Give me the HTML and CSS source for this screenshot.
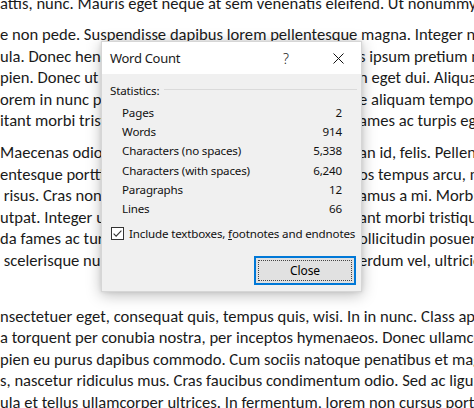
FILE: index.html
```html
<!DOCTYPE html>
<html lang="en">
<head>
<meta charset="utf-8">
<title>Word Count</title>
<link rel="stylesheet" href="styles.css">
</head>
<body>
<div class="doc">
  <p class="para">
    <span class="ln">attis, nunc. Mauris eget neque at sem venenatis eleifend. Ut nonummy.</span>
  </p>
  <p class="para">
    <span class="ln">e non pede. Suspendisse dapibus lorem pellentesque magna. Integer nulla.</span>
    <span class="ln split"><span class="l">ula. Donec hendrerit, felis et imperdiet euismod, purus ipsum pretium</span><span class="r">s ipsum pretium metus,</span></span>
    <span class="ln split"><span class="l">pien. Donec ut est in lectus consequat consequat. Etiam eget dui.</span><span class="r">n eget dui. Aliquam erat</span></span>
    <span class="ln split"><span class="l">orem in nunc porta tristique. Proin nec augue. Quisque aliquam</span><span class="r">e aliquam tempor magna.</span></span>
    <span class="ln split"><span class="l">itant morbi tristique senectus et netus et malesuada fames ac turpis</span><span class="r">ames ac turpis egestas.</span></span>
  </p>
  <p class="para para-end">
    <span class="ln split"><span class="l">Maecenas odio dolor, vulputate vel, auctor ac, accumsan id, felis.</span><span class="r">an id, felis. Pellentesque</span></span>
    <span class="ln split"><span class="l">entesque porttitor, velit lacinia egestas auctor, diam eros tempus</span><span class="r">os tempus arcu, nec</span></span>
    <span class="ln split"><span class="l"> risus. Cras non magna vel ante adipiscing rhoncus. Vivamus a mi.</span><span class="r">amus a mi. Morbi neque.</span></span>
    <span class="ln split"><span class="l">utpat. Integer ultrices lobortis eros. Pellentesque habitant</span><span class="r">ant morbi tristique</span></span>
    <span class="ln split"><span class="l">da fames ac turpis egestas. Proin semper, ante vitae sollicitudin</span><span class="r">ollicitudin posuere,</span></span>
    <span class="ln split"><span class="l"> scelerisque nunc massa eget pede. Sed velit urna, interdum</span><span class="r">erdum vel, ultricies</span></span>
  </p>
  <p class="para">
    <span class="ln">nsectetuer eget, consequat quis, tempus quis, wisi. In in nunc. Class aptent</span>
    <span class="ln">a torquent per conubia nostra, per inceptos hymenaeos. Donec ullamcorper</span>
    <span class="ln">pien eu purus dapibus commodo. Cum sociis natoque penatibus et magnis</span>
    <span class="ln">s, nascetur ridiculus mus. Cras faucibus condimentum odio. Sed ac ligula.</span>
    <span class="ln">ula et tellus ullamcorper ultrices. In fermentum, lorem non cursus porttitor,</span>
  </p>
</div>

<div class="dialog" role="dialog" aria-label="Word Count">
  <div class="titlebar">
    <span class="title">Word Count</span>
    <span class="tbtn help">?</span>
    <span class="tbtn close">
      <svg width="11" height="11" viewBox="0 0 11 11"><path d="M0.5 0.5L10.5 10.5M10.5 0.5L0.5 10.5" stroke="#111" stroke-width="1" fill="none"/></svg>
    </span>
  </div>
  <div class="body">
    <div class="stats-head"><span>Statistics:</span><span class="rule"></span></div>
    <div class="rows">
      <div class="row"><span>Pages</span><span>2</span></div>
      <div class="row"><span>Words</span><span>914</span></div>
      <div class="row"><span>Characters (no spaces)</span><span>5,338</span></div>
      <div class="row"><span>Characters (with spaces)</span><span>6,240</span></div>
      <div class="row"><span>Paragraphs</span><span>12</span></div>
      <div class="row"><span>Lines</span><span>66</span></div>
    </div>
    <label class="check">
      <svg class="box" width="13" height="13" viewBox="0 0 13 13"><rect x="0.5" y="0.5" width="12" height="12" fill="#fff" stroke="#333"/><path d="M2.6 6.6L5.1 9.1L10.4 3.6" fill="none" stroke="#333" stroke-width="1.1"/></svg>
      <span>Include textboxes, <u>f</u>ootnotes and endnotes</span>
    </label>
    <div class="actions">
      <button class="btn" type="button"><span class="focus"></span>Close</button>
    </div>
  </div>
</div>
</body>
</html>
```

FILE: styles.css
```css
html, body {
  margin: 0;
  padding: 0;
  background: #ffffff;
  overflow: hidden;
}

body {
  position: relative;
  width: 474px;
  height: 408px;
  font-family: Carlito, Calibri, Lato, "Liberation Sans", sans-serif;
  color: #1a1a1a;
}

.doc {
  margin-top: -7.5px;
}

.para {
  margin: 0 0 10px;
}

.para-end {
  margin-bottom: 34px;
}

.ln {
  display: block;
  height: 21.6px;
  line-height: 21.6px;
  font-size: 16.6px;
  white-space: pre;
}

.split {
  display: grid;
  grid-template-columns: 359px max-content;
}

.split .l {
  overflow: hidden;
}

/* Dialog */
.dialog {
  position: absolute;
  left: 101px;
  top: 41px;
  width: 261px;
  height: 251px;
  box-sizing: border-box;
  display: flex;
  flex-direction: column;
  background: #f0f0f0;
  border: 1px solid #d6d6d6;
  box-shadow: 0 3px 14px rgba(0, 0, 0, 0.26), 0 0 4px rgba(0, 0, 0, 0.1);
  font-family: "Segoe UI", "Noto Sans", sans-serif;
  font-size: 11.6px;
  letter-spacing: -0.17px;
  color: #111;
}

.titlebar {
  height: 32px;
  background: #ffffff;
  display: flex;
  align-items: center;
  padding-left: 8px;
}

.title {
  flex: 1;
  font-size: 13px;
  letter-spacing: -0.3px;
  color: #1a1a1a;
}

.tbtn {
  width: 46px;
  height: 32px;
  display: flex;
  align-items: center;
  justify-content: center;
}

.help {
  margin-right: 6px;
  font-size: 14px;
  font-weight: 300;
  color: #222;
}

.body {
  flex: 1;
  display: flex;
  flex-direction: column;
  padding: 9px 4px 6px 8px;
}

.stats-head {
  display: flex;
  align-items: center;
  gap: 5px;
  height: 16px;
  line-height: 16px;
}

.rule {
  flex: 1;
  height: 1px;
  margin-top: -3px;
  background: #dadada;
}

.rows {
  margin-top: 4px;
  padding: 0 15px 0 12px;
}

.row {
  display: flex;
  justify-content: space-between;
  height: 19.2px;
  line-height: 19.2px;
}

.check {
  display: flex;
  align-items: center;
  gap: 5px;
  height: 16px;
  margin-top: 7px;
  padding-left: 1px;
  white-space: nowrap;
}

.box {
  flex: none;
}

.actions {
  margin-top: auto;
  display: flex;
  justify-content: flex-end;
  padding-right: 1px;
}

.btn {
  position: relative;
  box-sizing: border-box;
  width: 102px;
  height: 29px;
  border: 2px solid #0078d7;
  background: #e1e1e1;
  font-family: inherit;
  font-size: 12px;
  letter-spacing: -0.1px;
  color: #000;
  padding: 0;
}

.focus {
  position: absolute;
  inset: 2px;
  border: 1px dotted #444;
}
```
